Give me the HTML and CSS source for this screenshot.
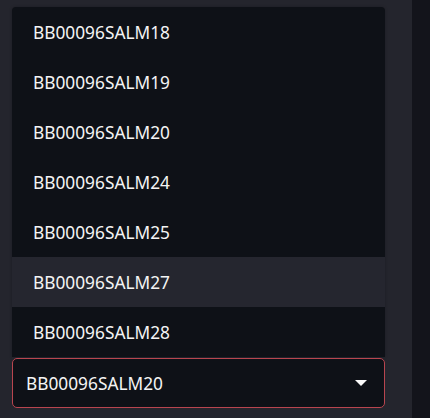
FILE: index.html
```html
<!DOCTYPE html>
<html>
<head>
<meta charset="utf-8">
<link rel="stylesheet" href="styles.css">
</head>
<body>
<div class="page">
  <div class="sidebar">
    <ul class="menu">
      <li class="option">BB00096SALM18</li>
      <li class="option">BB00096SALM19</li>
      <li class="option">BB00096SALM20</li>
      <li class="option">BB00096SALM24</li>
      <li class="option">BB00096SALM25</li>
      <li class="option option-hover">BB00096SALM27</li>
      <li class="option">BB00096SALM28</li>
    </ul>
    <div class="select">
      <span class="select-value">BB00096SALM20</span>
      <svg class="caret" width="12" height="6" viewBox="0 0 12 6"><path d="M0 0 H12 L6 6 Z" fill="#fafafa"/></svg>
    </div>
  </div>
  <div class="main"></div>
</div>
</body>
</html>
```

FILE: styles.css
```css
html, body {
  margin: 0;
  padding: 0;
}
body {
  background: #23242c;
  font-family: "Noto Sans", "Open Sans", sans-serif;
  color: #fafafa;
}
.page {
  display: flex;
  width: 430px;
  height: 418px;
  overflow: hidden;
}
.sidebar {
  width: 412px;
  flex: none;
  background: #24252d;
  padding: 7px 27px 0 12px;
  box-sizing: border-box;
  display: flex;
  flex-direction: column;
}
.main {
  flex: 1;
  background: #13141b;
}
.menu {
  list-style: none;
  margin: 0;
  padding: 0;
  background: #0e1117;
  border-radius: 4px 4px 0 0;
  box-shadow: 0 0 3px rgba(0,0,0,0.25);
}
.option {
  height: 50px;
  display: flex;
  align-items: center;
  padding-left: 21px;
  font-size: 17.3px;
  color: #f4f4f4;
}
.option-hover {
  background: #25262f;
}
.select {
  margin-top: 1px;
  height: 50px;
  box-sizing: border-box;
  border: 1px solid #b8454f;
  border-radius: 5px;
  background: #0e1117;
  display: flex;
  align-items: center;
  justify-content: space-between;
  padding: 0 17px 0 13px;
}
.select-value {
  font-size: 17.3px;
  color: #f4f4f4;
}
.caret {
  display: block;
}
```
